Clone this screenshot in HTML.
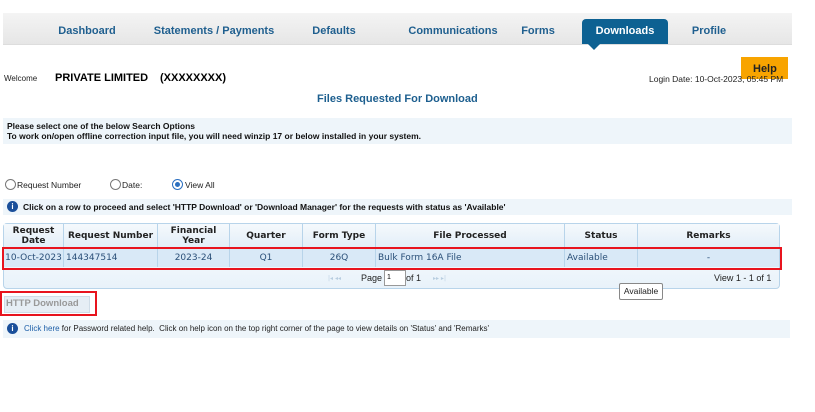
<!DOCTYPE html>
<html><head><style>
body{margin:0;width:815px;height:412px;background:#fff;position:relative;overflow:hidden;font-family:"Liberation Sans",Arial,sans-serif}
.a{position:absolute;white-space:nowrap}
.nav{left:3px;top:13px;width:789px;height:31px;background:linear-gradient(#f4f4f4,#e6e6e6);border-bottom:1px solid #ddd}
.nt{top:25px;font-size:11px;font-weight:bold;color:#1f5f8f;transform:translateX(-50%)}
.dl{left:582px;top:19px;width:86px;height:25px;background:#0d6192;border-radius:4px 4px 0 0}
table{border-collapse:collapse;font-family:"DejaVu Sans",sans-serif;font-size:9px}
td{border-right:1px solid #b8d4ea;text-align:center;padding:0}
</style></head><body>
<div class="a nav"></div>
<div class="a dl"></div>
<div class="a" style="left:588px;top:44px;width:0;height:0;border-left:6px solid transparent;border-right:6px solid transparent;border-top:6px solid #0d6192"></div>
<div class="a nt" style="left:87px">Dashboard</div>
<div class="a nt" style="left:214px">Statements / Payments</div>
<div class="a nt" style="left:334px">Defaults</div>
<div class="a nt" style="left:453px">Communications</div>
<div class="a nt" style="left:538px">Forms</div>
<div class="a nt" style="left:625px;color:#fff">Downloads</div>
<div class="a nt" style="left:709px">Profile</div>

<div class="a" style="left:741px;top:57px;width:47px;height:22px;background:#f8a400"></div>
<div class="a" style="left:753px;top:63px;font-size:11px;font-weight:bold;color:#222">Help</div>
<div class="a" style="left:4px;top:74px;font-size:8px;color:#222">Welcome</div>
<div class="a" style="left:55px;top:72px;font-size:11px;font-weight:bold;color:#000">PRIVATE LIMITED</div>
<div class="a" style="left:160px;top:72px;font-size:11px;font-weight:bold;color:#000">(XXXXXXXX)</div>
<div class="a" style="left:649px;top:74px;font-size:8.5px;color:#222">Login Date: 10-Oct-2023, 05:45 PM</div>
<div class="a" style="left:317px;top:93px;font-size:11px;font-weight:bold;color:#1d5f8f">Files Requested For Download</div>

<div class="a" style="left:3px;top:118px;width:789px;height:26px;background:#eef5fa"></div>
<div class="a" style="left:7px;top:121px;font-size:8.5px;font-weight:bold;color:#111;line-height:10px">Please select one of the below Search Options<br>To work on/open offline correction input file, you will need winzip 17 or below installed in your system.</div>

<div class="a" style="left:5px;top:179px;width:9px;height:9px;border:1px solid #777;border-radius:50%"></div>
<div class="a" style="left:17px;top:180px;font-size:8.5px;color:#222">Request Number</div>
<div class="a" style="left:110px;top:179px;width:9px;height:9px;border:1px solid #777;border-radius:50%"></div>
<div class="a" style="left:122px;top:180px;font-size:8.5px;color:#222">Date:</div>
<div class="a" style="left:172px;top:179px;width:9px;height:9px;border:1px solid #2a6fc0;border-radius:50%"></div>
<div class="a" style="left:175px;top:182px;width:5px;height:5px;background:#2a6fc0;border-radius:50%"></div>
<div class="a" style="left:185px;top:180px;font-size:8.5px;color:#222">View All</div>

<div class="a" style="left:3px;top:199px;width:789px;height:16px;background:#eef5fa"></div>
<div class="a" style="left:7px;top:201px;width:11px;height:11px;border-radius:50%;background:#1a4f9a;color:#fff;font-size:8px;font-weight:bold;text-align:center;line-height:11px">i</div>
<div class="a" style="left:23px;top:202px;font-size:8.5px;font-weight:bold;color:#111">Click on a row to proceed and select 'HTTP Download' or 'Download Manager' for the requests with status as 'Available'</div>

<div class="a" style="left:3px;top:223px;width:775px;height:64px;border:1px solid #b8d4ea;border-radius:4px;background:linear-gradient(#fff,#e8f2fa)"></div>
<table class="a" style="left:4px;top:224px;width:775px">
<tr style="height:24px;font-weight:bold;color:#222;background:linear-gradient(#f5f9fc,#e2eef8)">
<td style="width:59px;line-height:10px">Request<br>Date</td><td style="width:93px">Request Number</td><td style="width:71px;line-height:10px">Financial<br>Year</td><td style="width:72px">Quarter</td><td style="width:72px">Form Type</td><td style="width:188px">File Processed</td><td style="width:72px">Status</td><td style="border:0">Remarks</td></tr>
<tr style="height:19px;color:#2a4f78;background:#d9e9f7">
<td>10-Oct-2023</td><td style="text-align:left;padding-left:2px">144347514</td><td>2023-24</td><td>Q1</td><td>26Q</td><td style="text-align:left;padding-left:2px">Bulk Form 16A File</td><td style="text-align:left;padding-left:2px">Available</td><td style="border:0">-</td></tr>
</table>
<div class="a" style="left:2px;top:247px;width:776px;height:19px;border:2px solid #e8141e"></div>
<div class="a" style="left:328px;top:275px;font-size:6px;color:#b8cde0;font-family:'DejaVu Sans',sans-serif">|◂ ◂◂</div>
<div class="a" style="left:361px;top:273px;font-size:9px;color:#222">Page</div>
<div class="a" style="left:384px;top:270px;width:18px;height:14px;border:1px solid #999;background:#fff;font-size:7px;line-height:14px;padding-left:2px">1</div>
<div class="a" style="left:406px;top:273px;font-size:9px;color:#222">of 1</div>
<div class="a" style="left:433px;top:275px;font-size:6px;color:#b8cde0;font-family:'DejaVu Sans',sans-serif">▸▸ ▸|</div>
<div class="a" style="left:714px;top:273px;font-size:9px;color:#222">View 1 - 1 of 1</div>
<div class="a" style="left:619px;top:283px;width:42px;height:15px;border:1px solid #888;border-radius:2px;background:#fff;font-size:8.5px;line-height:15px;text-align:center;color:#222">Available</div>

<div class="a" style="left:4px;top:296px;width:84px;height:15px;background:#e6eef5;border:1px solid #d0dde8"></div>
<div class="a" style="left:6px;top:298px;font-size:9.5px;font-weight:bold;color:#999">HTTP Download</div>
<div class="a" style="left:0px;top:291px;width:93px;height:21px;border:2px solid #e8141e"></div>

<div class="a" style="left:3px;top:320px;width:787px;height:18px;background:#eef5fa"></div>
<div class="a" style="left:7px;top:323px;width:11px;height:11px;border-radius:50%;background:#1a4f9a;color:#fff;font-size:8px;font-weight:bold;text-align:center;line-height:11px">i</div>
<div class="a" style="left:24px;top:324px;font-size:8px;color:#222"><span style="color:#1d5fa8">Click here</span> for Password related help.&nbsp; Click on help icon on the top right corner of the page to view details on 'Status' and 'Remarks'</div>
</body></html>
